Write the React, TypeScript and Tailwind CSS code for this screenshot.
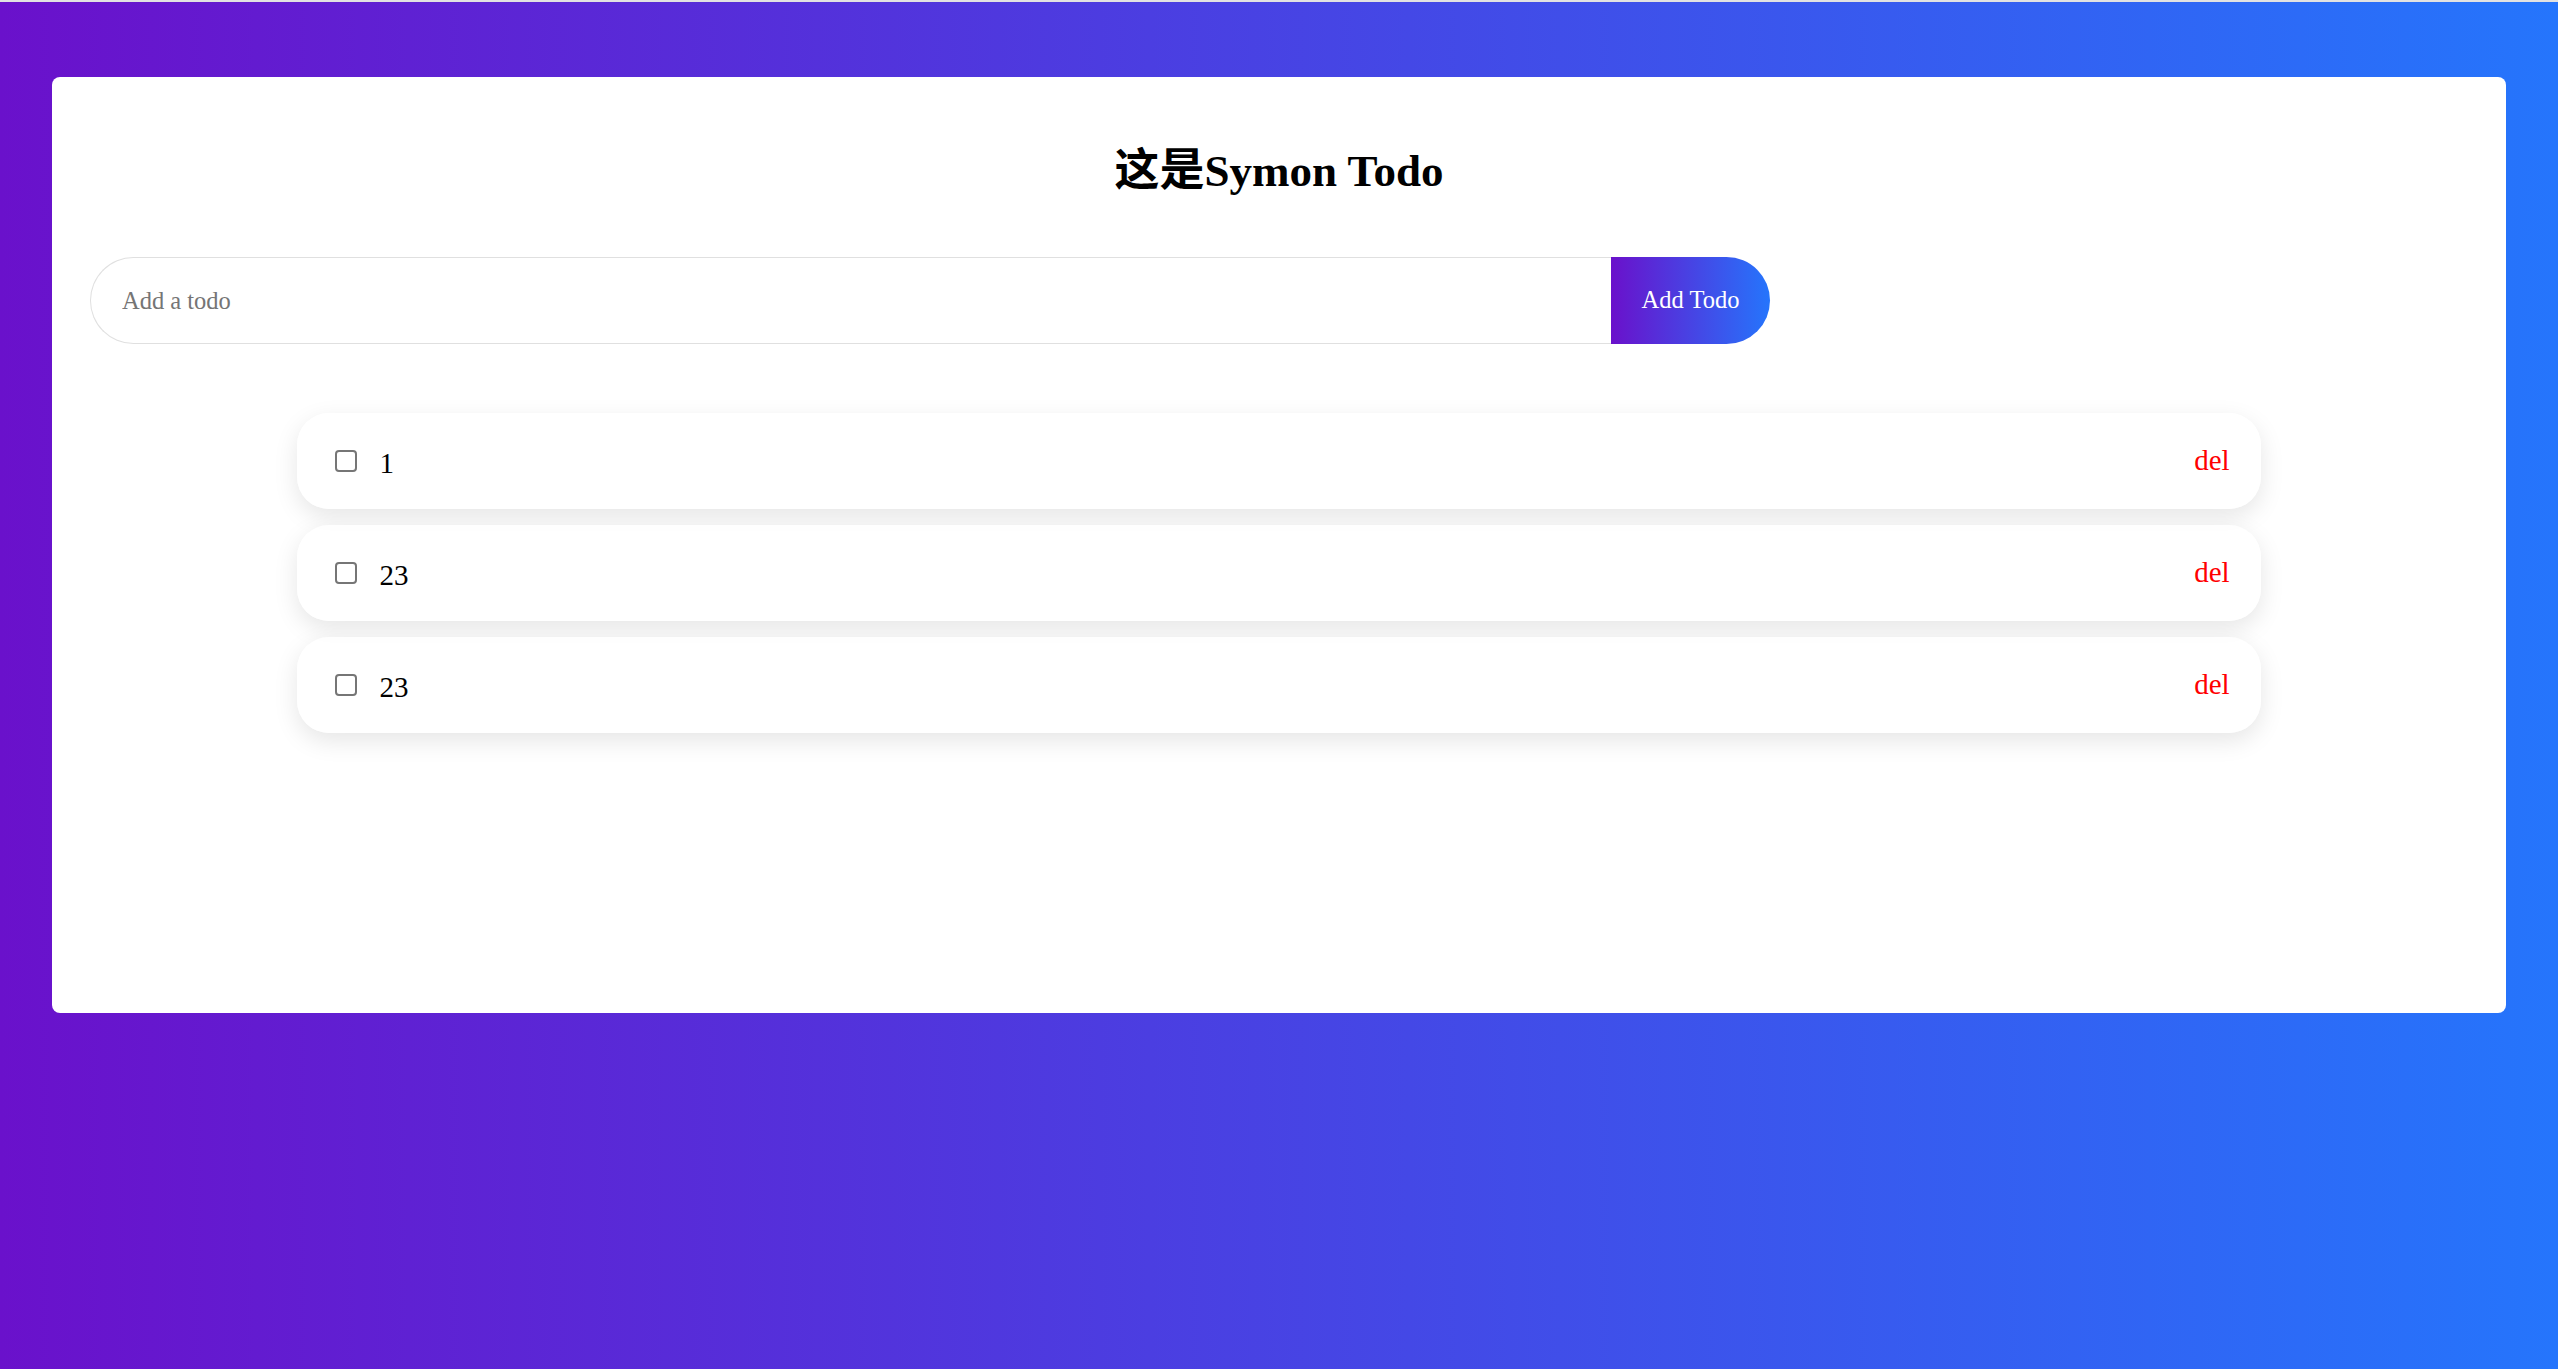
import React, { useState } from "react";

type Todo = {
  id: number;
  text: string;
  done: boolean;
};

const initialTodos: Todo[] = [
  { id: 1, text: "1", done: false },
  { id: 2, text: "23", done: false },
  { id: 3, text: "23", done: false },
];

const serif = "font-['Liberation_Serif','Noto_Sans_CJK_SC',serif]";

const TodoItem = ({
  todo,
  onToggle,
  onDelete,
}: {
  todo: Todo;
  onToggle: () => void;
  onDelete: () => void;
}) => {
  return (
    <li className="flex h-[96px] items-center justify-between rounded-[32px] bg-white/75 pl-[38px] pr-[31px] shadow-[0_8px_24px_rgba(0,0,0,0.1)]">
      <div className="flex items-center gap-[22px]">
        <input
          type="checkbox"
          checked={todo.done}
          onChange={onToggle}
          className="h-[22px] w-[22px] shrink-0 cursor-pointer appearance-none rounded-[4px] border-2 border-[#767676] bg-white checked:bg-[#2575fc]"
        />
        <span className={`pt-[5px] text-[29px] leading-normal text-black ${serif}`}>
          {todo.text}
        </span>
      </div>
      <button
        onClick={onDelete}
        className={`cursor-pointer text-[29px] leading-normal text-[#ff0000] ${serif}`}
      >
        del
      </button>
    </li>
  );
};

export default function App() {
  const [todos, setTodos] = useState<Todo[]>(initialTodos);
  const [value, setValue] = useState("");

  const addTodo = () => {
    if (!value.trim()) return;
    setTodos([...todos, { id: Date.now(), text: value.trim(), done: false }]);
    setValue("");
  };

  return (
    <div className="min-h-[1369px] w-full bg-[linear-gradient(to_right,#6a11cb,#2575fc)]">
      {/* thin grey strip at the very top */}
      <div className="h-[2px] w-full bg-[#e2e2e2]" />

      <div className="px-[52px] pt-[75px]">
        <div className="h-[936px] rounded-[8px] bg-white pt-[69px]">
          {/* Title */}
          <h1
            className={`text-center text-[45px] font-bold leading-[50px] text-black ${serif}`}
          >
            这是Symon Todo
          </h1>

          {/* Input row */}
          <div className="ml-[38px] mt-[61px] flex h-[87px] w-[1680px]">
            <input
              autoFocus
              value={value}
              onChange={(e) => setValue(e.target.value)}
              onKeyDown={(e) => e.key === "Enter" && addTodo()}
              placeholder="Add a todo"
              className={`h-full flex-1 rounded-l-full border-[1.5px] border-r-0 border-[#e0e0e0] bg-white pl-[31px] text-[24.5px] text-black outline-none placeholder:text-[#757575] ${serif}`}
            />
            <button
              onClick={addTodo}
              className={`h-full w-[159px] cursor-pointer rounded-r-full bg-[linear-gradient(to_right,#6a11cb,#2575fc)] text-[24.5px] text-white ${serif}`}
            >
              Add Todo
            </button>
          </div>

          {/* List */}
          <ul className="mx-auto mt-[69px] flex w-[80%] flex-col gap-[16px]">
            {todos.map((todo) => (
              <TodoItem
                key={todo.id}
                todo={todo}
                onToggle={() =>
                  setTodos(
                    todos.map((t) =>
                      t.id === todo.id ? { ...t, done: !t.done } : t
                    )
                  )
                }
                onDelete={() => setTodos(todos.filter((t) => t.id !== todo.id))}
              />
            ))}
          </ul>
        </div>
      </div>
    </div>
  );
}
